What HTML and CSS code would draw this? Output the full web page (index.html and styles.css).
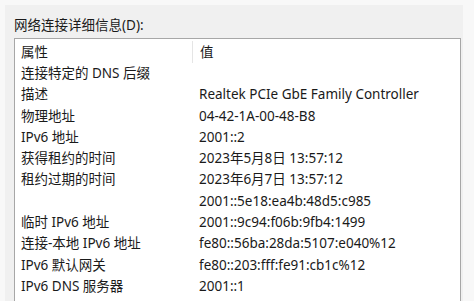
FILE: index.html
```html
<!DOCTYPE html>
<html lang="zh-CN">
<head>
    <meta charset="UTF-8">
    <title>网络连接详细信息</title>
    <link rel="stylesheet" href="styles.css">
</head>
<body>
    <div class="panel">
        <div class="caption">网络连接详细信息(D):</div>
        <div class="listbox">
            <div class="row head">
                <div class="prop">属性</div>
                <div class="val">值</div>
            </div>
            <div class="row"><div class="prop">连接特定的 DNS 后缀</div><div class="val"></div></div>
            <div class="row"><div class="prop">描述</div><div class="val">Realtek PCIe GbE Family Controller</div></div>
            <div class="row"><div class="prop">物理地址</div><div class="val">04-42-1A-00-48-B8</div></div>
            <div class="row"><div class="prop">IPv6 地址</div><div class="val">2001::2</div></div>
            <div class="row"><div class="prop">获得租约的时间</div><div class="val">2023年5月8日 13:57:12</div></div>
            <div class="row"><div class="prop">租约过期的时间</div><div class="val">2023年6月7日 13:57:12</div></div>
            <div class="row"><div class="prop"></div><div class="val">2001::5e18:ea4b:48d5:c985</div></div>
            <div class="row"><div class="prop">临时 IPv6 地址</div><div class="val">2001::9c94:f06b:9fb4:1499</div></div>
            <div class="row"><div class="prop">连接-本地 IPv6 地址</div><div class="val">fe80::56ba:28da:5107:e040%12</div></div>
            <div class="row"><div class="prop">IPv6 默认网关</div><div class="val">fe80::203:fff:fe91:cb1c%12</div></div>
            <div class="row"><div class="prop">IPv6 DNS 服务器</div><div class="val">2001::1</div></div>
        </div>
    </div>
</body>
</html>
```

FILE: styles.css
```css
html, body {
    margin: 0;
    padding: 0;
    height: 100%;
    overflow: hidden;
}
body {
    background: #f8f8f8;
    font-family: "Noto Sans", "Noto Sans CJK SC", sans-serif;
    font-size: 13.5px;
    color: #1a1a1a;
}
.panel {
    margin: 5px 11px 0 5px;
    background: #f0f0f0;
    height: 296px;
    padding: 11px 0 0 9px;
    box-sizing: border-box;
    overflow: hidden;
}
.caption {
    height: 22px;
    line-height: 18px;
}
.listbox {
    width: 445px;
    background: #fff;
    border: 1px solid #a7a7a7;
    border-bottom: none;
    height: 270px;
    overflow: hidden;
}
.row {
    display: flex;
    height: 21.3px;
    line-height: 21.3px;
    white-space: nowrap;
}
.row.head {
    height: 24px;
    line-height: 26px;
}
.prop {
    width: 171px;
    padding-left: 6px;
    flex: none;
}
.val {
    padding-left: 7px;
}
.head .val {
    border-left: 1px solid #e5e5e5;
    margin-top: 2px;
    line-height: 22px;
}
```
